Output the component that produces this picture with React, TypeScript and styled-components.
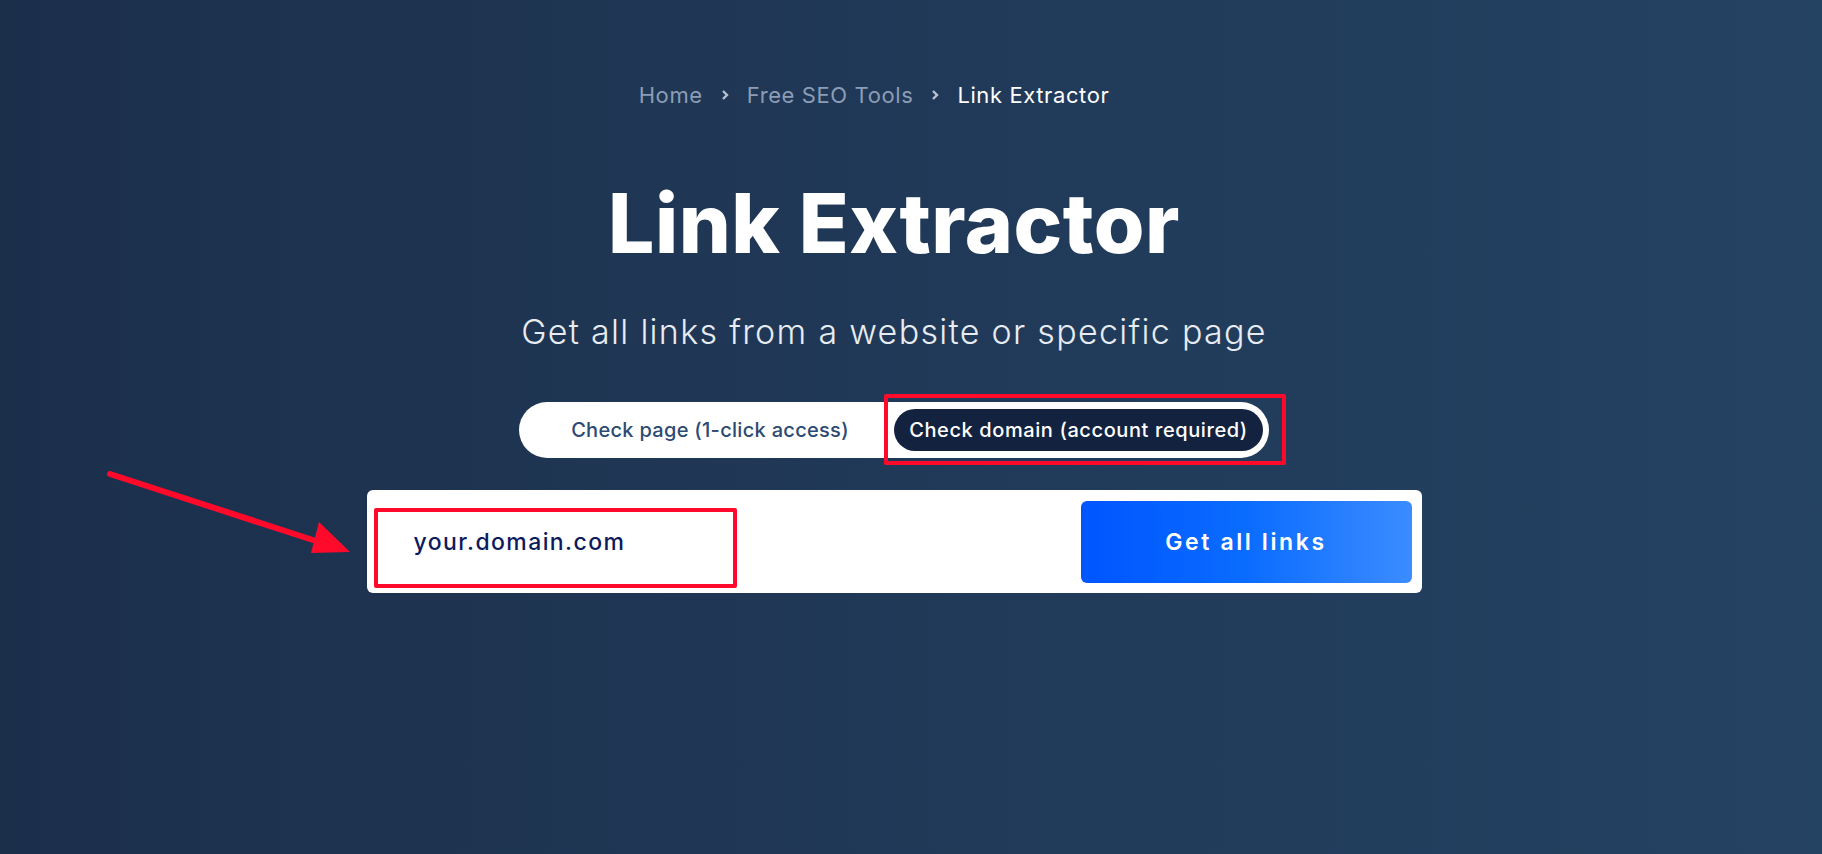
import styled, { createGlobalStyle } from "styled-components";

const GlobalStyle = createGlobalStyle`
  html, body {
    margin: 0;
    padding: 0;
  }
  body {
    font-family: Inter, "Open Sans", "Liberation Sans", sans-serif;
    background: linear-gradient(90deg, #1b2f4b 0%, #213a59 55%, #244262 100%);
    min-height: 100vh;
  }
`;

const Page = styled.main`
  min-height: 854px;
  box-sizing: border-box;
  display: flex;
  flex-direction: column;
  align-items: center;
  padding: 80px 34px 0 0;
`;

const Breadcrumb = styled.nav`
  display: flex;
  align-items: center;
  gap: 15px;
  font-size: 22px;
  line-height: 30px;
  color: #8c9db5;
  margin-right: 40px;
`;

const Crumb = styled.span<{ $current?: boolean }>`
  color: ${(p) => (p.$current ? "#ffffff" : "#8c9db5")};
  letter-spacing: 0.6px;
`;

const Chevron = styled.svg`
  width: 14px;
  height: 14px;
  stroke: #b7c3d4;
  fill: none;
  stroke-width: 2.4;
`;

const Title = styled.h1`
  margin: 69px 0 0;
  color: #ffffff;
  font-size: 82px;
  line-height: 90px;
  font-weight: 800;
  letter-spacing: 0.5px;
`;

const Subtitle = styled.p`
  margin: 43px 0 0;
  color: #e7ecf2;
  font-size: 34px;
  line-height: 40px;
  font-weight: 300;
  letter-spacing: 1.3px;
`;

const SwitchWrap = styled.div`
  position: relative;
  margin-top: 50px;
`;

const Switch = styled.div`
  display: grid;
  grid-template-columns: 368px 369px;
  padding: 7px 6px 7px 7px;
  background: #ffffff;
  border-radius: 28px;
`;

const SwitchOption = styled.button<{ $active?: boolean }>`
  height: 42px;
  border: none;
  border-radius: 21px;
  font-family: inherit;
  font-size: 20px;
  font-weight: 500;
  letter-spacing: ${(p) => (p.$active ? "0.6px" : "0.3px")};
  cursor: pointer;
  background: ${(p) => (p.$active ? "#13233f" : "transparent")};
  color: ${(p) => (p.$active ? "#ffffff" : "#2d4a72")};
`;

const Highlight = styled.div<{ $top: number; $left: number; $w: number; $h: number }>`
  position: absolute;
  top: ${(p) => p.$top}px;
  left: ${(p) => p.$left}px;
  width: ${(p) => p.$w}px;
  height: ${(p) => p.$h}px;
  border: 4px solid #ff0a2b;
  border-radius: 2px;
  box-sizing: border-box;
  pointer-events: none;
`;

const FormCard = styled.form`
  position: relative;
  margin-top: 32px;
  width: 1055px;
  height: 103px;
  box-sizing: border-box;
  background: #ffffff;
  border-radius: 6px;
  display: flex;
  align-items: center;
  justify-content: space-between;
  padding: 0 10px 0 45px;
`;

const DomainInput = styled.input`
  border: none;
  outline: none;
  font-family: inherit;
  font-size: 23px;
  font-weight: 500;
  letter-spacing: 1.4px;
  color: #0e1a5c;
  width: 400px;
  &::placeholder {
    color: #0e1a5c;
  }
`;

const SubmitButton = styled.button`
  width: 331px;
  height: 82px;
  border: none;
  border-radius: 6px;
  background: linear-gradient(90deg, #0055ff 0%, #0a6cff 50%, #3c8cff 100%);
  color: #ffffff;
  font-family: inherit;
  font-size: 23px;
  font-weight: 600;
  letter-spacing: 2.6px;
  cursor: pointer;
`;

const Arrow = styled.svg`
  position: absolute;
  left: -266px;
  top: -26px;
  width: 260px;
  height: 100px;
  overflow: visible;
`;

export default function App() {
  return (
    <>
      <GlobalStyle />
      <Page>
        <Breadcrumb>
          <Crumb>Home</Crumb>
          <Chevron viewBox="0 0 14 14">
            <path d="M5 3l4 4-4 4" />
          </Chevron>
          <Crumb>Free SEO Tools</Crumb>
          <Chevron viewBox="0 0 14 14">
            <path d="M5 3l4 4-4 4" />
          </Chevron>
          <Crumb $current>Link Extractor</Crumb>
        </Breadcrumb>

        <Title>Link Extractor</Title>
        <Subtitle>Get all links from a website or specific page</Subtitle>

        <SwitchWrap>
          <Switch>
            <SwitchOption type="button">Check page (1-click access)</SwitchOption>
            <SwitchOption type="button" $active>
              Check domain (account required)
            </SwitchOption>
          </Switch>
          <Highlight $top={-8} $left={365} $w={402} $h={71} />
        </SwitchWrap>

        <FormCard onSubmit={(e) => e.preventDefault()}>
          <DomainInput placeholder="your.domain.com" />
          <SubmitButton type="submit">Get all links</SubmitButton>
          <Highlight $top={18} $left={7} $w={363} $h={80} />
          <Arrow viewBox="0 0 260 100">
            <line x1="9" y1="10" x2="215" y2="77" stroke="#ff0a2b" strokeWidth="6" strokeLinecap="round" />
            <polygon points="218,58 210,89 249,88" fill="#ff0a2b" />
          </Arrow>
        </FormCard>
      </Page>
    </>
  );
}
